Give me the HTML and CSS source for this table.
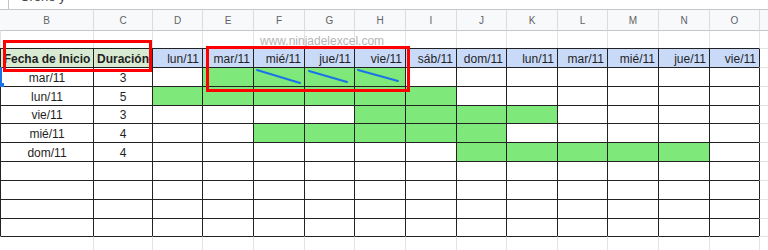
FILE: index.html
```html
<!DOCTYPE html>
<html>
<head>
<meta charset="utf-8">
<link rel="stylesheet" href="styles.css">
</head>
<body>
<div class="page">
  <div class="formula"><span class="fx-sep"></span><span class="fx-text">Crono y</span></div>
  <div class="sheet">
    <!-- column letters -->
    <div class="hd">B</div><div class="hd">C</div><div class="hd">D</div><div class="hd">E</div><div class="hd">F</div><div class="hd">G</div><div class="hd">H</div><div class="hd">I</div><div class="hd">J</div><div class="hd">K</div><div class="hd">L</div><div class="hd">M</div><div class="hd">N</div><div class="hd">O</div><div class="hd"></div>
    <!-- row 1 -->
    <div class="c r1"></div><div class="c r1"></div><div class="c r1"></div><div class="c r1"></div><div class="c r1"></div><div class="c r1"></div><div class="c r1"></div><div class="c r1"></div><div class="c r1"></div><div class="c r1"></div><div class="c r1"></div><div class="c r1"></div><div class="c r1"></div><div class="c r1"></div><div class="c r1"></div>
    <!-- row 2 header -->
    <div class="c t thg ctr">Fecha de Inicio</div><div class="c t thg ctr">Duración</div>
    <div class="c t thb rt">lun/11</div><div class="c t thb rt">mar/11</div><div class="c t thb rt">mié/11</div><div class="c t thb rt">jue/11</div><div class="c t thb rt">vie/11</div><div class="c t thb rt">sáb/11</div><div class="c t thb rt">dom/11</div><div class="c t thb rt">lun/11</div><div class="c t thb rt">mar/11</div><div class="c t thb rt">mié/11</div><div class="c t thb rt">jue/11</div><div class="c t thb rt">vie/11</div>
    <div class="c pt"></div>
    <!-- row 3 -->
    <div class="c t ctr">mar/11</div><div class="c t ctr">3</div>
    <div class="c t"></div><div class="c t g"></div>
    <div class="c t g"><svg class="mark" viewBox="0 0 50 18"><line x1="3" y1="2" x2="46" y2="15"/></svg></div>
    <div class="c t g"><svg class="mark" viewBox="0 0 49 18"><line x1="4" y1="3" x2="42" y2="14"/></svg></div>
    <div class="c t g"><svg class="mark" viewBox="0 0 50 18"><line x1="3" y1="2" x2="43" y2="13"/></svg></div>
    <div class="c t"></div><div class="c t"></div><div class="c t"></div><div class="c t"></div><div class="c t"></div><div class="c t"></div><div class="c t"></div>
    <div class="c pt"></div>
    <!-- row 4 -->
    <div class="c t ctr">lun/11</div><div class="c t ctr">5</div>
    <div class="c t g"></div><div class="c t g"></div><div class="c t g"></div><div class="c t g"></div><div class="c t g"></div><div class="c t g"></div><div class="c t"></div><div class="c t"></div><div class="c t"></div><div class="c t"></div><div class="c t"></div><div class="c t"></div>
    <div class="c pt"></div>
    <!-- row 5 -->
    <div class="c t ctr">vie/11</div><div class="c t ctr">3</div>
    <div class="c t"></div><div class="c t"></div><div class="c t"></div><div class="c t"></div><div class="c t g"></div><div class="c t g"></div><div class="c t g"></div><div class="c t g"></div><div class="c t"></div><div class="c t"></div><div class="c t"></div><div class="c t"></div>
    <div class="c pt"></div>
    <!-- row 6 -->
    <div class="c t ctr">mié/11</div><div class="c t ctr">4</div>
    <div class="c t"></div><div class="c t"></div><div class="c t g"></div><div class="c t g"></div><div class="c t g"></div><div class="c t g"></div><div class="c t g"></div><div class="c t"></div><div class="c t"></div><div class="c t"></div><div class="c t"></div><div class="c t"></div>
    <div class="c pt"></div>
    <!-- row 7 -->
    <div class="c t ctr">dom/11</div><div class="c t ctr">4</div>
    <div class="c t"></div><div class="c t"></div><div class="c t"></div><div class="c t"></div><div class="c t"></div><div class="c t"></div><div class="c t g"></div><div class="c t g"></div><div class="c t g"></div><div class="c t g"></div><div class="c t g"></div><div class="c t"></div>
    <div class="c pt"></div>
    <!-- rows 8-11 -->
    <div class="c t"></div><div class="c t"></div><div class="c t"></div><div class="c t"></div><div class="c t"></div><div class="c t"></div><div class="c t"></div><div class="c t"></div><div class="c t"></div><div class="c t"></div><div class="c t"></div><div class="c t"></div><div class="c t"></div><div class="c t"></div><div class="c pt"></div>
    <div class="c t"></div><div class="c t"></div><div class="c t"></div><div class="c t"></div><div class="c t"></div><div class="c t"></div><div class="c t"></div><div class="c t"></div><div class="c t"></div><div class="c t"></div><div class="c t"></div><div class="c t"></div><div class="c t"></div><div class="c t"></div><div class="c pt"></div>
    <div class="c t"></div><div class="c t"></div><div class="c t"></div><div class="c t"></div><div class="c t"></div><div class="c t"></div><div class="c t"></div><div class="c t"></div><div class="c t"></div><div class="c t"></div><div class="c t"></div><div class="c t"></div><div class="c t"></div><div class="c t"></div><div class="c pt"></div>
    <div class="c t"></div><div class="c t"></div><div class="c t"></div><div class="c t"></div><div class="c t"></div><div class="c t"></div><div class="c t"></div><div class="c t"></div><div class="c t"></div><div class="c t"></div><div class="c t"></div><div class="c t"></div><div class="c t"></div><div class="c t"></div><div class="c pt"></div>
    <!-- row 12 -->
    <div class="c bt bl0"></div><div class="c bt"></div><div class="c bt"></div><div class="c bt"></div><div class="c bt"></div><div class="c bt"></div><div class="c bt"></div><div class="c bt"></div><div class="c bt"></div><div class="c bt"></div><div class="c bt"></div><div class="c bt"></div><div class="c bt"></div><div class="c bt"></div><div class="c"></div>
  </div>

  <div class="watermark">www.ninjadelexcel.com</div>
  <div class="redbox box1"></div>
  <div class="redbox box2"></div>
  <div class="sel"><span class="sel-dot"></span></div>
</div>
</body>
</html>
```

FILE: styles.css
```css
* { box-sizing: border-box; }
html, body { margin: 0; padding: 0; background: #fff; }
body {
  font-family: "Liberation Sans", Arial, sans-serif;
  font-size: 12px;
  color: #1f1f1f;
  width: 768px;
  height: 250px;
  overflow: hidden;
}
.page { position: relative; width: 768px; height: 250px; overflow: hidden; }

.formula {
  height: 10px;
  border-bottom: 1px solid #c4c7c5;
  display: flex;
  align-items: flex-start;
  overflow: hidden;
}
.fx-sep {
  width: 0;
  height: 9px;
  margin-left: 8px;
  border-left: 1px solid #c4c7c5;
}
.fx-text {
  margin-left: 11px;
  margin-top: -10px;
  font-size: 13px;
  line-height: 14px;
  color: #444;
}

.sheet {
  display: grid;
  grid-template-columns: 93px 59px 50px 51px 51px 50px 51px 51px 50px 51px 50px 51px 51px 50px 1fr;
  grid-template-rows: 20px 18px 19px 19px 19px 18px 19px 19px 19px 19px 19px 18px 19px;
}

.hd {
  background: #f8f9fa;
  border-left: 1px solid #dadce0;
  color: #5f6368;
  font-size: 10px;
  display: flex;
  align-items: center;
  justify-content: center;
}
.hd:first-child { border-left: none; }

.c {
  border-top: 1px solid #e2e3e3;
  border-left: 1px solid #e2e3e3;
  display: flex;
  align-items: flex-end;
  padding-bottom: 1px;
  line-height: 14px;
  white-space: nowrap;
  overflow: hidden;
}
.r1 { border-top-color: #c4c7c5; }
.t { border-top-color: #222; border-left-color: #222; }
.pt { border-left-color: #222; }
.bt { border-top-color: #222; }
.bl0 { border-left-color: transparent; }

.ctr { justify-content: center; }
.rt { justify-content: flex-end; padding-right: 3px; }

.thg { background: #d9ead3; font-weight: bold; }
.thb { background: #c9daf8; }
.g { background: #7ee87b; }

.mark {
  display: block;
  width: 100%;
  height: 18px;
  align-self: flex-start;
}
.mark line {
  stroke: #1a73e8;
  stroke-width: 2;
  stroke-linecap: round;
}

.watermark {
  position: absolute;
  left: 260px;
  top: 34px;
  font-size: 12px;
  line-height: 14px;
  color: #b5b5b5;
}

.redbox {
  position: absolute;
  border: 3px solid #ff0000;
}
.box1 { left: 3px; top: 40px; width: 149px; height: 32px; }
.box2 { left: 206px; top: 46px; width: 204px; height: 46px; }

.sel {
  position: absolute;
  left: 0;
  top: 67px;
  width: 2px;
  height: 20px;
  background: #1a73e8;
}
.sel-dot {
  position: absolute;
  left: 0;
  bottom: 0;
  width: 4px;
  height: 4px;
  background: #1a73e8;
}
```
